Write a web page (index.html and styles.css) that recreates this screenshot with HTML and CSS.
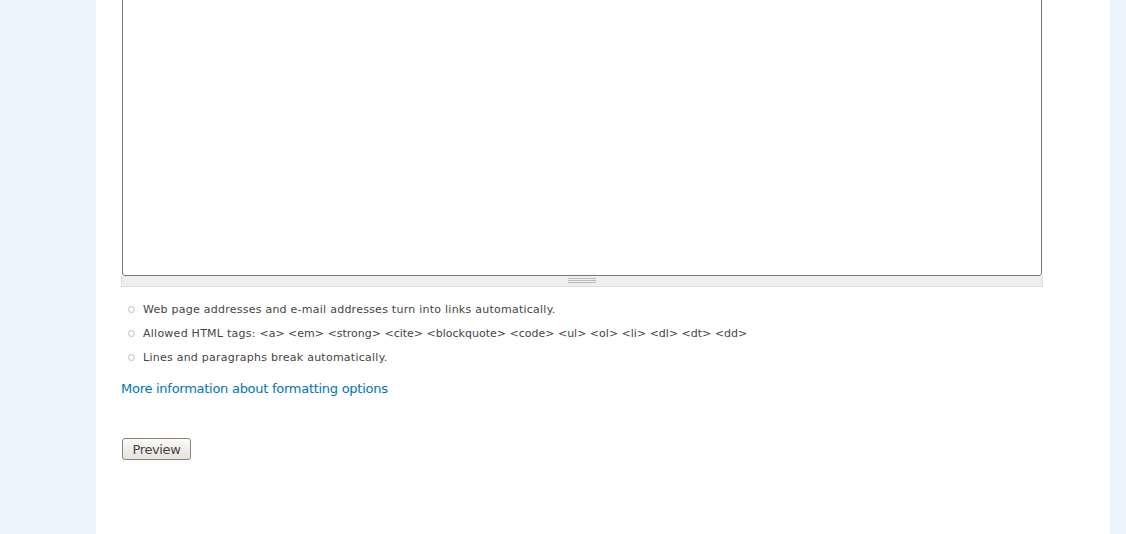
FILE: index.html
```html
<!DOCTYPE html>
<html>
<head>
<meta charset="utf-8">
<link rel="stylesheet" href="styles.css">
</head>
<body>
<div class="page">
  <div class="content">
    <div class="field">
      <textarea class="body-text"></textarea>
      <div class="grippie"></div>
    </div>
    <ul class="tips">
      <li>Web page addresses and e-mail addresses turn into links automatically.</li>
      <li>Allowed HTML tags: <span class="tags">&lt;a&gt; &lt;em&gt; &lt;strong&gt; &lt;cite&gt; &lt;blockquote&gt; &lt;code&gt; &lt;ul&gt; &lt;ol&gt; &lt;li&gt; &lt;dl&gt; &lt;dt&gt; &lt;dd&gt;</span></li>
      <li>Lines and paragraphs break automatically.</li>
    </ul>
    <p class="more"><a href="#">More information about formatting options</a></p>
    <div class="actions">
      <button class="btn" type="button">Preview</button>
    </div>
  </div>
</div>
</body>
</html>
```

FILE: styles.css
```css
html, body {
  margin: 0;
  padding: 0;
  height: 100%;
  overflow: hidden;
}
body {
  background: #edf5fc;
  font-family: "DejaVu Sans", Verdana, sans-serif;
  color: #333;
}
.page {
  display: flow-root;
  margin-left: 96px;
  width: 1014px;
  height: 100%;
  background: #fff;
}
.content {
  padding-left: 25px;
}
.field {
  width: 922px;
  margin-top: -40px;
}
.body-text {
  display: block;
  box-sizing: border-box;
  width: 920px;
  height: 316px;
  margin: 0 0 0 1px;
  padding: 0;
  border: 1px solid #7d7770;
  border-radius: 0 0 3px 3px;
  background: #fff;
  resize: none;
  outline: none;
}
.grippie {
  box-sizing: border-box;
  height: 11px;
  background: #eee;
  border: 1px solid #ddd;
  border-top-width: 0;
  position: relative;
}
.grippie::after {
  content: "";
  position: absolute;
  left: 446px;
  top: 2px;
  width: 28px;
  height: 5px;
  border-top: 1px solid #bbb;
  border-bottom: 1px solid #bbb;
  box-sizing: border-box;
  background: linear-gradient(#bbb, #bbb) center / 100% 1px no-repeat;
}
.tips {
  margin: 15px 0 0 0;
  padding: 0 0 0 22px;
  list-style: none;
  font-size: 11px;
  letter-spacing: 0.25px;
  color: #444;
}
.tips .tags {
  letter-spacing: 0;
}
.tips li {
  position: relative;
  line-height: 16px;
  margin: 0 0 8px 0;
}
.tips li::before {
  content: "";
  position: absolute;
  left: -15px;
  top: 4px;
  width: 7px;
  height: 7px;
  box-sizing: border-box;
  border: 1px solid #bbb;
  border-radius: 50%;
}
.more {
  margin: 14px 0 0 0;
  font-size: 13px;
  line-height: 18px;
  letter-spacing: -0.27px;
}
.more a {
  color: #0074bd;
  text-decoration: none;
}
.actions {
  margin-top: 40px;
  padding-left: 1px;
}
.btn {
  box-sizing: border-box;
  height: 22px;
  width: 69px;
  padding: 0;
  font-family: "DejaVu Sans", Verdana, sans-serif;
  font-size: 13px;
  letter-spacing: -0.4px;
  color: #444;
  background: linear-gradient(#fbfaf8, #e6e2dc);
  border: 1px solid #8a837c;
  border-radius: 3px;
}
```
